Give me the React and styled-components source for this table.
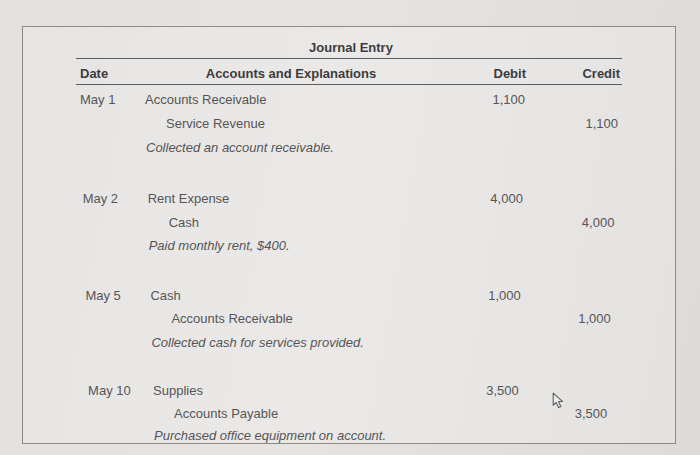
import React from "react";
import styled, { createGlobalStyle } from "styled-components";

const entries = [
    {
        date: "May 1",
        debitAccount: "Accounts Receivable",
        creditAccount: "Service Revenue",
        note: "Collected an account receivable.",
        amount: "1,100",
    },
    {
        date: "May 2",
        debitAccount: "Rent Expense",
        creditAccount: "Cash",
        note: "Paid monthly rent, $400.",
        amount: "4,000",
    },
    {
        date: "May 5",
        debitAccount: "Cash",
        creditAccount: "Accounts Receivable",
        note: "Collected cash for services provided.",
        amount: "1,000",
    },
    {
        date: "May 10",
        debitAccount: "Supplies",
        creditAccount: "Accounts Payable",
        note: "Purchased office equipment on account.",
        amount: "3,500",
    },
];

const App = () => {
    return (
        <>
            <GlobalStyle />
            <Screen>
                <Frame>
                    <Table>
                        <Title>Journal Entry</Title>
                        <HeaderRow>
                            <HeadCell>Date</HeadCell>
                            <HeadCell align="center">Accounts and Explanations</HeadCell>
                            <HeadCell align="right">Debit</HeadCell>
                            <HeadCell align="right">Credit</HeadCell>
                        </HeaderRow>
                        <Body>
                            {entries.map((entry, index) => (
                                <Entry key={entry.date} step={index}>
                                    <Line>
                                        <DateCell>{entry.date}</DateCell>
                                        <Account>{entry.debitAccount}</Account>
                                        <Amount>{entry.amount}</Amount>
                                        <Amount />
                                    </Line>
                                    <Line>
                                        <DateCell />
                                        <Account indent>{entry.creditAccount}</Account>
                                        <Amount />
                                        <Amount>{entry.amount}</Amount>
                                    </Line>
                                    <Line>
                                        <DateCell />
                                        <Note>{entry.note}</Note>
                                        <Amount />
                                        <Amount />
                                    </Line>
                                </Entry>
                            ))}
                        </Body>
                    </Table>
                    <Pointer viewBox="0 0 12 16" width="13" height="17">
                        <path
                            d="M1 1 L1 12.5 L3.8 9.8 L6 14.6 L8.2 13.6 L6 8.9 L9.8 8.9 Z"
                            fill="#ecebea"
                            stroke="#5e5e5e"
                            strokeWidth="1"
                            strokeLinejoin="round"
                        />
                    </Pointer>
                </Frame>
            </Screen>
        </>
    );
};

export default App;

const GlobalStyle = createGlobalStyle`
    body {
        margin: 0;
        background: #dfdddc;
        font-family: "Liberation Sans", Arial, sans-serif;
    }
`;

const Screen = styled.div`
    width: 700px;
    height: 455px;
    overflow: hidden;
    padding-top: 26px;
    box-sizing: border-box;
    background: linear-gradient(100deg, #e3e1e0 0%, #e6e4e3 45%, #dddbda 100%);
`;

const Frame = styled.div`
    position: relative;
    margin-left: 22px;
    width: 654px;
    height: 418px;
    box-sizing: border-box;
    border: 1px solid #8c8b8a;
    background: linear-gradient(100deg, #e7e5e4 0%, #ebe9e8 50%, #e4e2e1 100%);
    padding: 10px 0 0 53px;
`;

const Table = styled.div`
    width: 546px;
    color: #555555;
    font-size: 13px;
`;

const Title = styled.div`
    height: 21px;
    line-height: 21px;
    text-align: center;
    font-weight: bold;
    color: #3c3c3c;
    padding-left: 4px;
    border-bottom: 1px solid #5c5c5c;
`;

const HeaderRow = styled.div`
    display: grid;
    grid-template-columns: 68px 300px 80px 94px;
    height: 26px;
    line-height: 23px;
    padding-top: 3px;
    box-sizing: border-box;
    border-bottom: 1px solid #5c5c5c;
`;

const HeadCell = styled.div`
    font-weight: bold;
    color: #3c3c3c;
    text-align: ${(p) => p.align || "left"};
    padding-left: ${(p) => (p.align ? "0" : "4px")};
    padding-right: ${(p) => (p.align === "center" ? "6px" : "0")};
    margin-right: ${(p) => (p.align === "right" ? "-2px" : "0")};
`;

const Body = styled.div`
    padding-top: 3px;
`;

/* the photo is shot at a slight angle: each lower entry sits a little further in and tighter */
const Entry = styled.div`
    --line: ${(p) => 24 - p.step * 0.4}px;
    --credit: ${(p) => 93 - p.step * 1.5}px;
    margin-bottom: ${(p) => 27 - p.step * 0.5}px;
    padding-left: ${(p) => p.step * 2.7}px;
    padding-right: ${(p) => 4 + p.step * 3.6}px;
`;

const Line = styled.div`
    display: grid;
    grid-template-columns: 68px 300px 1fr var(--credit);
    height: var(--line);
    line-height: var(--line);
`;

const DateCell = styled.div`
    padding-left: 4px;
`;

const Account = styled.div`
    padding-left: ${(p) => (p.indent ? "22px" : "1px")};
    white-space: nowrap;
`;

const Note = styled.div`
    padding-left: 2px;
    font-style: italic;
    white-space: nowrap;
`;

const Amount = styled.div`
    text-align: right;
`;

const Pointer = styled.svg`
    position: absolute;
    left: 529px;
    top: 365px;
`;
